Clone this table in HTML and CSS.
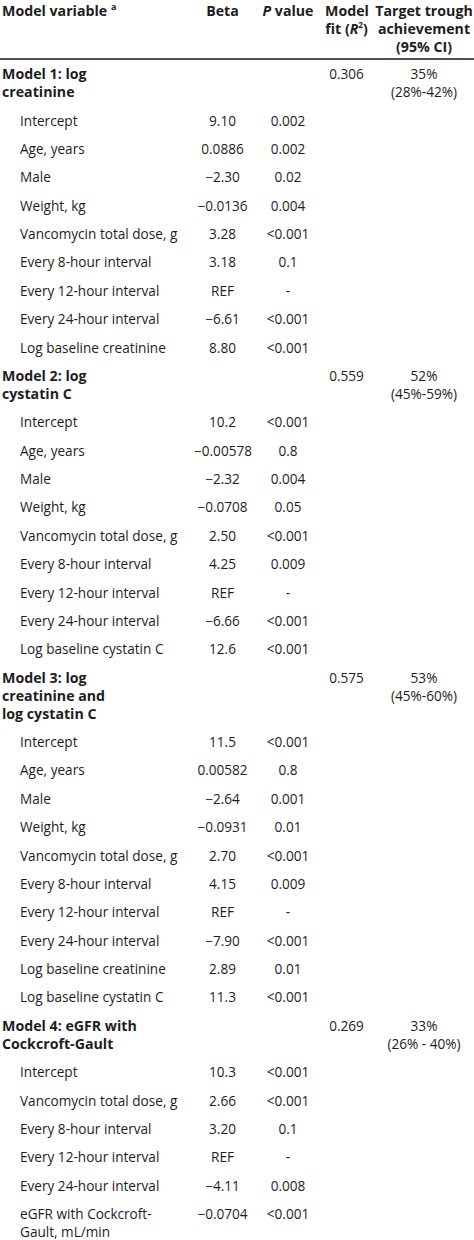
FILE: index.html
```html
<!DOCTYPE html>
<html lang="en">
<head>
<meta charset="utf-8">
<title>Model table</title>
<link rel="stylesheet" href="styles.css">
</head>
<body>
<div class="frame">
<table class="models">
  <colgroup>
    <col class="c-var"><col class="c-beta"><col class="c-p"><col class="c-fit"><col class="c-target">
  </colgroup>
  <thead>
    <tr>
      <th class="var">Model variable <sup>a</sup></th>
      <th>Beta</th>
      <th><i>P</i> value</th>
      <th>Model<br>fit (<i>R</i><sup class="sq">2</sup>)</th>
      <th>Target trough<br>achievement<br>(95% CI)</th>
    </tr>
  </thead>
  <tbody>
    <tr class="model"><td class="var">Model 1: log<br>creatinine</td><td></td><td></td><td>0.306</td><td>35%<br>(28%-42%)</td></tr>
    <tr><td class="item">Intercept</td><td>9.10</td><td>0.002</td><td></td><td></td></tr>
    <tr><td class="item">Age, years</td><td>0.0886</td><td>0.002</td><td></td><td></td></tr>
    <tr><td class="item">Male</td><td>−2.30</td><td>0.02</td><td></td><td></td></tr>
    <tr><td class="item">Weight, kg</td><td>−0.0136</td><td>0.004</td><td></td><td></td></tr>
    <tr><td class="item">Vancomycin total dose, g</td><td>3.28</td><td>&lt;0.001</td><td></td><td></td></tr>
    <tr><td class="item">Every 8-hour interval</td><td>3.18</td><td>0.1</td><td></td><td></td></tr>
    <tr><td class="item">Every 12-hour interval</td><td>REF</td><td>-</td><td></td><td></td></tr>
    <tr><td class="item">Every 24-hour interval</td><td>−6.61</td><td>&lt;0.001</td><td></td><td></td></tr>
    <tr><td class="item">Log baseline creatinine</td><td>8.80</td><td>&lt;0.001</td><td></td><td></td></tr>

    <tr class="model"><td class="var">Model 2: log<br>cystatin C</td><td></td><td></td><td>0.559</td><td>52%<br>(45%-59%)</td></tr>
    <tr><td class="item">Intercept</td><td>10.2</td><td>&lt;0.001</td><td></td><td></td></tr>
    <tr><td class="item">Age, years</td><td>−0.00578</td><td>0.8</td><td></td><td></td></tr>
    <tr><td class="item">Male</td><td>−2.32</td><td>0.004</td><td></td><td></td></tr>
    <tr><td class="item">Weight, kg</td><td>−0.0708</td><td>0.05</td><td></td><td></td></tr>
    <tr><td class="item">Vancomycin total dose, g</td><td>2.50</td><td>&lt;0.001</td><td></td><td></td></tr>
    <tr><td class="item">Every 8-hour interval</td><td>4.25</td><td>0.009</td><td></td><td></td></tr>
    <tr><td class="item">Every 12-hour interval</td><td>REF</td><td>-</td><td></td><td></td></tr>
    <tr><td class="item">Every 24-hour interval</td><td>−6.66</td><td>&lt;0.001</td><td></td><td></td></tr>
    <tr><td class="item">Log baseline cystatin C</td><td>12.6</td><td>&lt;0.001</td><td></td><td></td></tr>

    <tr class="model"><td class="var">Model 3: log<br>creatinine and<br>log cystatin C</td><td></td><td></td><td>0.575</td><td>53%<br>(45%-60%)</td></tr>
    <tr><td class="item">Intercept</td><td>11.5</td><td>&lt;0.001</td><td></td><td></td></tr>
    <tr><td class="item">Age, years</td><td>0.00582</td><td>0.8</td><td></td><td></td></tr>
    <tr><td class="item">Male</td><td>−2.64</td><td>0.001</td><td></td><td></td></tr>
    <tr><td class="item">Weight, kg</td><td>−0.0931</td><td>0.01</td><td></td><td></td></tr>
    <tr><td class="item">Vancomycin total dose, g</td><td>2.70</td><td>&lt;0.001</td><td></td><td></td></tr>
    <tr><td class="item">Every 8-hour interval</td><td>4.15</td><td>0.009</td><td></td><td></td></tr>
    <tr><td class="item">Every 12-hour interval</td><td>REF</td><td>-</td><td></td><td></td></tr>
    <tr><td class="item">Every 24-hour interval</td><td>−7.90</td><td>&lt;0.001</td><td></td><td></td></tr>
    <tr><td class="item">Log baseline creatinine</td><td>2.89</td><td>0.01</td><td></td><td></td></tr>
    <tr><td class="item">Log baseline cystatin C</td><td>11.3</td><td>&lt;0.001</td><td></td><td></td></tr>

    <tr class="model"><td class="var">Model 4: eGFR with<br>Cockcroft-Gault</td><td></td><td></td><td>0.269</td><td>33%<br>(26% - 40%)</td></tr>
    <tr><td class="item">Intercept</td><td>10.3</td><td>&lt;0.001</td><td></td><td></td></tr>
    <tr><td class="item">Vancomycin total dose, g</td><td>2.66</td><td>&lt;0.001</td><td></td><td></td></tr>
    <tr><td class="item">Every 8-hour interval</td><td>3.20</td><td>0.1</td><td></td><td></td></tr>
    <tr><td class="item">Every 12-hour interval</td><td>REF</td><td>-</td><td></td><td></td></tr>
    <tr><td class="item">Every 24-hour interval</td><td>−4.11</td><td>0.008</td><td></td><td></td></tr>
    <tr><td class="item">eGFR with Cockcroft-<br>Gault, mL/min</td><td>−0.0704</td><td>&lt;0.001</td><td></td><td></td></tr>
  </tbody>
</table>
</div>
</body>
</html>
```
FILE: styles.css
```css
html, body {
  margin: 0;
  padding: 0;
  background: #ffffff;
}

body {
  overflow: hidden;
}

.frame {
  width: 474px;
  overflow: hidden;
}

.models {
  width: 480px;
  table-layout: fixed;
  border-collapse: collapse;
  font-family: "Open Sans", "Noto Sans", sans-serif;
  font-size: 13.6px;
  line-height: 18px;
  color: #1f1c1d;
}

.c-var { width: 194px; }
.c-beta { width: 57px; }
.c-p { width: 74px; }
.c-fit { width: 43px; }
.c-target { width: 112px; }

.models th {
  font-size: 14.2px;
  font-weight: 700;
  text-align: center;
  vertical-align: top;
  padding: 2px 0 2px 0;
  border-bottom: 2px solid #4f4f4f;
  white-space: nowrap;
}

.models th.var {
  text-align: left;
  padding-left: 2px;
}

.models sup {
  font-size: 9px;
  line-height: 0;
  vertical-align: 6px;
}

.models sup.sq {
  font-size: 8px;
  vertical-align: 6px;
}

.models td {
  padding: 5.2px 0;
  text-align: center;
  vertical-align: top;
  white-space: nowrap;
}

.models td.var {
  text-align: left;
  padding-left: 2px;
  font-size: 14.2px;
  font-weight: 700;
}

.models td.item {
  text-align: left;
  padding-left: 20px;
}
```
